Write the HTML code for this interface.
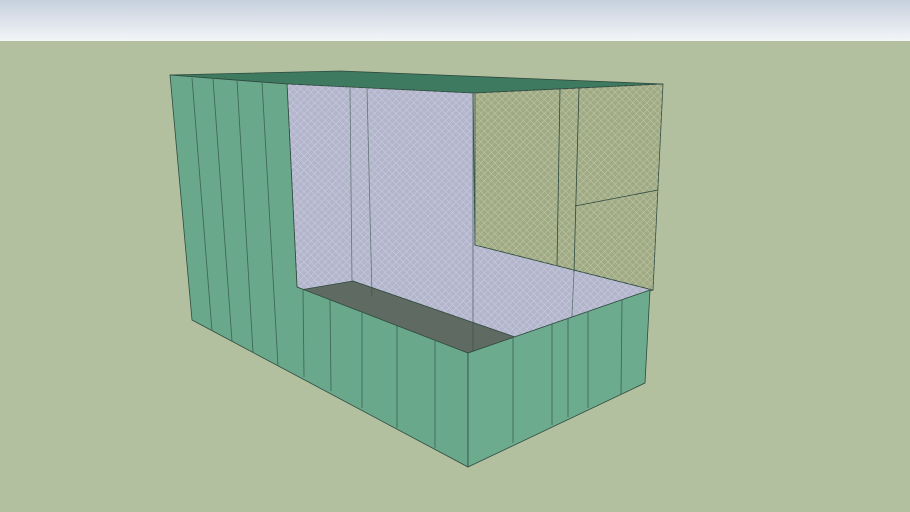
<!DOCTYPE html>
<html><head><style>
html,body{margin:0;padding:0;width:910px;height:512px;overflow:hidden;background:#b3c09f}
</style></head><body>
<svg width="910" height="512" viewBox="0 0 910 512" xmlns="http://www.w3.org/2000/svg">
<defs>
<linearGradient id="sky" x1="0" y1="0" x2="0" y2="1">
<stop offset="0" stop-color="#c6d0de"/><stop offset="1" stop-color="#f3f5f7"/>
</linearGradient>
<pattern id="mesh" width="5" height="5" patternUnits="userSpaceOnUse" patternTransform="rotate(45)">
<rect width="5" height="5" fill="none"/>
<path d="M0 0H5M0 0V5" stroke="#ffffff" stroke-opacity="0.35" stroke-width="1"/>
</pattern>
</defs>
<rect x="0" y="0" width="910" height="41" fill="url(#sky)"/>
<rect x="0" y="41" width="910" height="471" fill="#b3c09f"/>
<g stroke="#2f4a3e" stroke-width="0.8" stroke-linejoin="round">
<polygon points="170,75 340,71 663,84 473,93 287,84" fill="#3e7a60"/>
<polygon points="287,84 473,93 475,245 653,290 468,353 297,287" fill="#b2b5cc"/>
<polygon points="287,84 473,93 475,245 653,290 468,353 297,287" fill="url(#mesh)" stroke="none"/>
<polygon points="300,290 353,281 515,337 468,353" fill="#5f6a63"/>
<polygon points="475,93 663,84 653,290 475,245" fill="#a0ab84"/>
<polygon points="475,93 663,84 653,290 475,245" fill="url(#mesh)" stroke="none"/>
<line x1="560" y1="89" x2="557" y2="265"/>
<line x1="579" y1="88" x2="574" y2="272"/>
<line x1="575" y1="206" x2="658" y2="190"/>
<line x1="350" y1="88" x2="352" y2="282" stroke-opacity="0.6"/>
<line x1="367" y1="89" x2="372" y2="296" stroke-opacity="0.6"/>
<line x1="473" y1="93" x2="473" y2="353" stroke-opacity="0.7"/>
<line x1="574" y1="272" x2="569" y2="380" stroke-opacity="0.6"/>
<polygon points="170,75 287,84 297,287 468,353 468,467 192,320" fill="#6aa88c"/>
<polygon points="468,353 650,290 645,383 468,467" fill="#6cab8e"/>
</g>
<g stroke="#3f6a55" stroke-width="0.9" fill="none">
<line x1="192" y1="78" x2="212" y2="331"/>
<line x1="213" y1="79" x2="232" y2="341"/>
<line x1="237" y1="80" x2="253" y2="352"/>
<line x1="262" y1="82" x2="278" y2="366"/>
<line x1="303" y1="289" x2="304" y2="377"/>
<line x1="330" y1="300" x2="331" y2="391"/>
<line x1="362" y1="312" x2="362" y2="408"/>
<line x1="397" y1="326" x2="397" y2="428"/>
<line x1="435" y1="340" x2="435" y2="448"/>
<line x1="513" y1="337" x2="513" y2="443"/>
<line x1="552" y1="324" x2="552" y2="425"/>
<line x1="568" y1="318" x2="568" y2="417"/>
<line x1="588" y1="311" x2="588" y2="408"/>
<line x1="622" y1="299" x2="621" y2="394"/>
</g>
</svg>
</body></html>
